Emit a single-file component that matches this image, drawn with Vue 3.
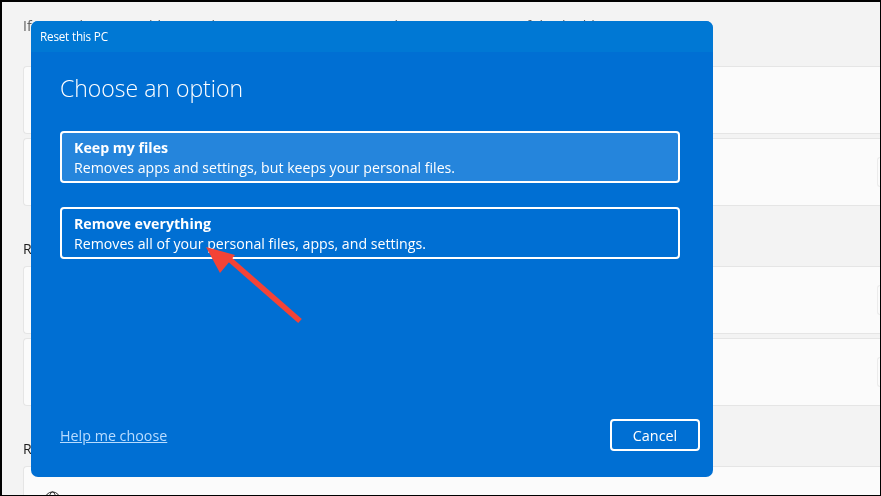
<script setup>
const sections = [
  { label: "If you're having problems with your PC, you can remove the current version of this build.", muted: true, stubs: [false, true] },
  { label: 'Recovery options', stubs: [true, true] },
  { label: 'Related support', stubs: [false], globe: true }
]
</script>

<template>
  <div class="frame">
    <div class="page">
      <section v-for="s in sections" :key="s.label" class="section">
        <div class="label" :class="{ muted: s.muted }">{{ s.label }}</div>
        <div class="cards">
          <div v-for="(stub, i) in s.stubs" :key="i" class="card" :class="{ open: s.globe }">
            <svg v-if="s.globe" class="globe" width="17" height="17" viewBox="0 0 18 18" fill="none" stroke="#222" stroke-width="1">
              <circle cx="9" cy="9" r="8" />
              <ellipse cx="9" cy="9" rx="3.5" ry="8" />
              <path d="M1 9h16M2 5h14M2 13h14" />
            </svg>
            <div v-if="stub" class="stub"></div>
          </div>
        </div>
      </section>
    </div>

    <div class="dialog">
      <div class="titlebar">Reset this PC</div>
      <div class="body">
        <h1 class="heading">Choose an option</h1>
        <div class="options">
          <div class="option active">
            <div class="opt-title">Keep my files</div>
            <div class="opt-desc">Removes apps and settings, but keeps your personal files.</div>
          </div>
          <div class="option">
            <div class="opt-title">Remove everything</div>
            <div class="opt-desc">Removes all of your personal files, apps, and settings.</div>
          </div>
        </div>
        <div class="footer">
          <a class="help">Help me choose</a>
          <div class="cancel">Cancel</div>
        </div>
      </div>
    </div>

    <svg class="arrow" width="120" height="100" viewBox="0 0 120 100">
      <path d="M110 91 L38 28" stroke="#f44336" stroke-width="5.5" fill="none" />
      <path d="M16 17 L45 25 L30 43 Z" fill="#f44336" />
    </svg>
  </div>
</template>

<style scoped>
.frame {
  position: relative;
  box-sizing: border-box;
  width: 881px;
  height: 496px;
  overflow: hidden;
  background: #f3f3f3;
  border-style: solid;
  border-color: #000;
  border-width: 2px 1px 1px 2px;
  font-family: "Open Sans", "Noto Sans", sans-serif;
}
.page {
  display: flex;
  flex-direction: column;
  padding: 14px 0 0 21px;
}
.section {
  display: flex;
  flex-direction: column;
}
.label {
  height: 50px;
  font-size: 14px;
  line-height: 19px;
  color: #1b1b1b;
  white-space: nowrap;
  will-change: opacity;
}
.label.muted { color: #5f5f5f; }
.section + .section .label {
  height: 27px;
  margin-top: 33px;
}
.cards {
  display: flex;
  flex-direction: column;
  gap: 4px;
}
.card {
  box-sizing: border-box;
  height: 68px;
  background: #fbfbfb;
  border: 1px solid #e5e5e5;
  border-radius: 4px 0 0 4px;
  border-right: none;
  display: flex;
  align-items: center;
  justify-content: flex-end;
}
.card.open {
  justify-content: flex-start;
  align-items: flex-start;
  padding: 24px 0 0 20px;
  height: 60px;
}
.stub {
  box-sizing: border-box;
  width: 3px;
  height: 30px;
  border: 1px solid #ececec;
  border-right: none;
  border-radius: 3px 0 0 3px;
}
.dialog {
  position: absolute;
  left: 29px;
  top: 19px;
  width: 682px;
  height: 456px;
  display: flex;
  flex-direction: column;
  border-radius: 7px;
  overflow: hidden;
  background: #006fd3;
  color: #fff;
}
.titlebar {
  height: 31px;
  padding-left: 9px;
  background: #0078d4;
  font-size: 11.7px;
  letter-spacing: -0.2px;
  line-height: 31px;
}
.body {
  flex: 1;
  display: flex;
  flex-direction: column;
  padding: 0 13px 26px 29px;
}
.heading {
  margin: 19px 0 0;
  font-size: 23px;
  line-height: 34px;
  font-weight: 300;
}
.options {
  display: flex;
  flex-direction: column;
  gap: 24px;
  margin-top: 26px;
  padding-right: 20px;
}
.option {
  box-sizing: border-box;
  height: 52px;
  padding: 5px 12px 0;
  border: 2px solid #fff;
  border-radius: 4px;
}
.option.active { background: #2585dc; }
.opt-title {
  font-size: 14.2px;
  line-height: 20px;
  font-weight: 700;
}
.opt-desc {
  font-size: 14.16px;
  line-height: 19px;
}
.footer {
  margin-top: auto;
  display: flex;
  align-items: center;
  justify-content: space-between;
}
.help {
  font-size: 14.3px;
  color: #b8dcff;
  text-decoration: underline;
}
.cancel {
  box-sizing: border-box;
  width: 90px;
  height: 32px;
  border: 2px solid #fff;
  border-radius: 4px;
  text-align: center;
  font-size: 14.4px;
  line-height: 29px;
}
.arrow {
  position: absolute;
  left: 188px;
  top: 228px;
}
</style>
